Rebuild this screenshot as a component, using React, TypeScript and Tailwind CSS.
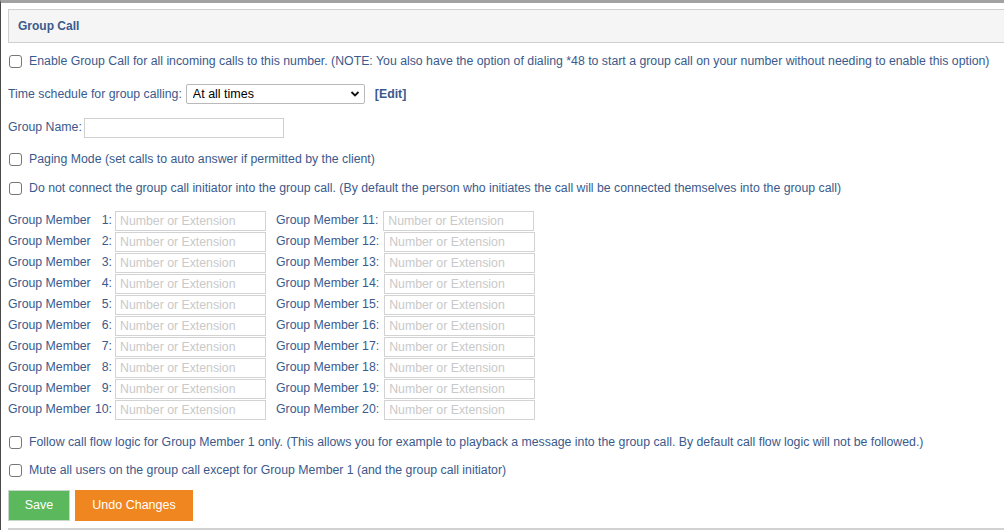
const members = [1, 2, 3, 4, 5, 6, 7, 8, 9, 10];

function Box() {
  return <span className="block h-[13px] w-[13px] shrink-0 rounded-[3px] border border-[#767676] bg-white" />;
}

function CheckRow({ h, children }: { h: string; children: React.ReactNode }) {
  return (
    <div className={`flex items-center gap-[7px] whitespace-nowrap pl-[1px] ${h}`}>
      <Box />
      <span>{children}</span>
    </div>
  );
}

function MemberInput() {
  return (
    <input
      placeholder="Number or Extension"
      className="h-[20px] w-[151px] shrink-0 border border-[#d3d3d3] bg-white px-[4px] text-[12.3px] text-black outline-none placeholder:text-[#c9c9c9]"
    />
  );
}

export default function App() {
  return (
    <div
      className="h-[530px] w-[1004px] overflow-hidden border-t-[3px] border-l border-t-[#a2a2a2] border-l-[#4a4a4a] bg-white pl-[7px] text-[12.3px] text-[#3b5a8c]"
      style={{ fontFamily: '"Liberation Sans", Arial, sans-serif' }}
    >
      <div className="-mr-[10px] mt-[6px] flex h-[34px] items-center border border-[#cfcfcf] bg-[#f5f5f5] pl-[9px] text-[12px] font-bold">
        Group Call
      </div>

      <CheckRow h="h-[36px]">
        Enable Group Call for all incoming calls to this number. (NOTE: You also have the option of dialing *48 to start a group call on your
        number without needing to enable this option)
      </CheckRow>

      <div className="flex h-[30px] items-center whitespace-nowrap">
        <span>Time schedule for group calling:</span>
        <div className="relative ml-[4px]">
          <select className="h-[20px] w-[179px] appearance-none rounded-[2px] border border-[#b9b9b9] bg-white pl-[6px] text-[12.5px] text-black outline-none">
            <option>At all times</option>
          </select>
          <svg className="pointer-events-none absolute right-[5px] top-[6px]" width="10" height="8" viewBox="0 0 10 8">
            <path d="M1.5 2 L5 5.5 L8.5 2" fill="none" stroke="#111" strokeWidth="1.8" />
          </svg>
        </div>
        <span className="ml-[10px] font-bold">[Edit]</span>
      </div>

      <div className="flex h-[37px] items-center whitespace-nowrap">
        <span>Group Name:</span>
        <input className="ml-[2px] h-[20px] w-[200px] border border-[#d0d0d0] bg-white outline-none" />
      </div>

      <CheckRow h="h-[26px]">Paging Mode (set calls to auto answer if permitted by the client)</CheckRow>
      <CheckRow h="h-[32px]">
        Do not connect the group call initiator into the group call. (By default the person who initiates the call will be connected themselves
        into the group call)
      </CheckRow>

      <div className="mt-[6px] flex flex-col">
        {members.map((n) => (
          <div key={n} className="flex h-[21px] items-center whitespace-nowrap">
            <span className="flex w-[104px] shrink-0 justify-between">
              <span>Group Member</span>
              <span>{n}:</span>
            </span>
            <span className="ml-[3px] flex">
              <MemberInput />
            </span>
            <span className="ml-[10px] shrink-0">Group Member {n + 10}:</span>
            <span className="ml-[5px] flex">
              <MemberInput />
            </span>
          </div>
        ))}
      </div>

      <div className="mt-[8px]">
        <CheckRow h="h-[28px]">
          Follow call flow logic for Group Member 1 only. (This allows you for example to playback a message into the group call. By default call
          flow logic will not be followed.)
        </CheckRow>
        <CheckRow h="h-[28px]">Mute all users on the group call except for Group Member 1 (and the group call initiator)</CheckRow>
      </div>

      <div className="mt-[6px] flex gap-[5px] text-[12.5px] text-white">
        <button className="h-[31px] w-[62px] border border-[#c8d8c8] bg-[#5cb85c]">Save</button>
        <button className="h-[31px] w-[118px] bg-[#f0861f]">Undo Changes</button>
      </div>

      <div className="-mr-[10px] mt-[7px] border-t-2 border-[#d2d2d2]" />
    </div>
  );
}
